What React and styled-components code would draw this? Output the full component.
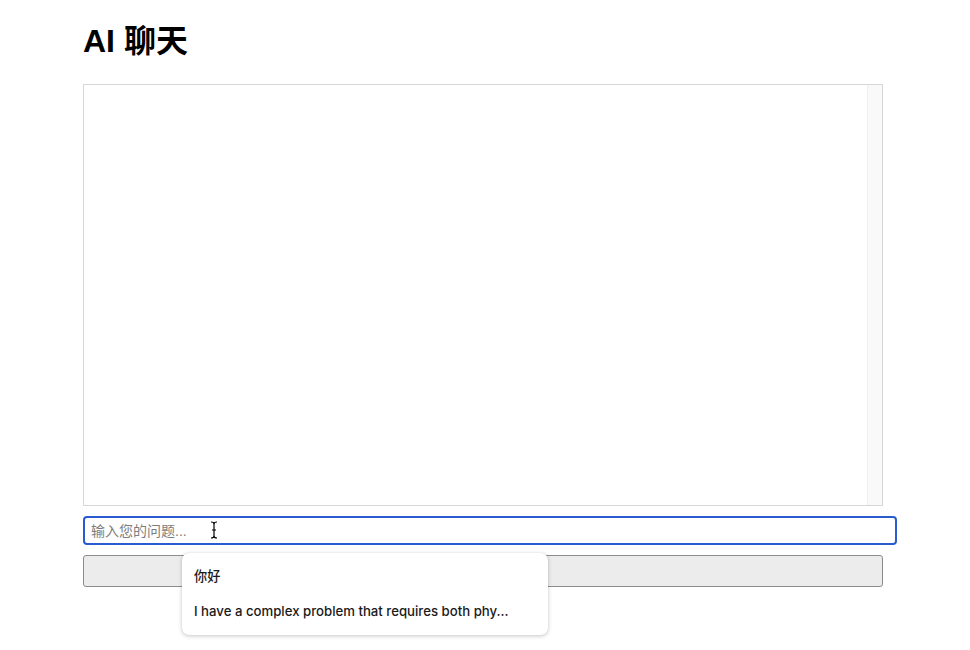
import React from 'react';
import styled, { createGlobalStyle } from 'styled-components';

const GlobalStyle = createGlobalStyle`
    html, body {
        margin: 0;
        padding: 0;
        background: #ffffff;
        font-family: "Liberation Sans", "Noto Sans CJK SC", Arial, sans-serif;
    }
`;

const Page = styled.div`
    width: 800px;
    min-height: 630px;
    padding: 20px 0 0 83px;
    position: relative;
`;

const Title = styled.h1`
    margin: 0 0 22px 0;
    font-size: 32px;
    line-height: 42px;
    font-weight: 700;
    color: #000;
    font-family: "Liberation Sans", "Noto Sans CJK SC", sans-serif;
`;

const ChatBox = styled.div`
    position: relative;
    height: 420px;
    border: 1px solid #d6d6d6;
    background: #fff;
    margin-bottom: 10px;

    &::after {
        content: '';
        position: absolute;
        top: 0;
        right: 0;
        bottom: 0;
        width: 14px;
        background: #f9f9f9;
        border-left: 1px solid #f0f0f0;
    }
`;

const InputWrap = styled.div`
    position: relative;
    margin-bottom: 10px;
`;

const Input = styled.input`
    display: block;
    box-sizing: border-box;
    width: 814px;
    height: 29px;
    padding: 0 6px;
    margin: 0;
    border: 2px solid #2a5bd0;
    border-radius: 4px;
    outline: none;
    font-size: 14px;
    color: #222;
    font-family: "Liberation Sans", "Noto Sans CJK SC", sans-serif;
    background: #fff;

    &::placeholder {
        color: #7d7d7d;
    }
`;

const Cursor = styled.svg`
    position: absolute;
    left: 126px;
    top: 5px;
    width: 10px;
    height: 18px;
`;

const SendButton = styled.button`
    display: block;
    width: 800px;
    height: 32px;
    border: 1px solid #8c8c8c;
    border-radius: 3px;
    background: #ececec;
`;

const Suggestions = styled.ul`
    position: absolute;
    left: 182px;
    top: 553px;
    width: 366px;
    margin: 0;
    padding: 6px 0;
    list-style: none;
    background: #fff;
    border-radius: 7px;
    box-shadow: 0 1px 4px rgba(0, 0, 0, 0.22), 0 0 1px rgba(0, 0, 0, 0.15);
    z-index: 5;
`;

const Suggestion = styled.li`
    padding: 0 12px;
    height: 35px;
    line-height: 35px;
    font-size: 13.2px;
    font-weight: 500;
    color: #1a1a1a;
    font-family: Inter, "Noto Sans CJK SC", sans-serif;
    white-space: nowrap;
`;

function App() {
    return (
        <>
            <GlobalStyle />
            <Page>
                <Title>AI 聊天</Title>
                <ChatBox />
                <InputWrap>
                    <Input placeholder="输入您的问题..." />
                    <Cursor viewBox="0 0 10 18">
                        <path d="M2 1 Q5 1 5 3 Q5 1 8 1 M5 3 V15 M2 17 Q5 17 5 15 Q5 17 8 17 M3 9 H7"
                            fill="none" stroke="#000" strokeWidth="1.2" />
                    </Cursor>
                </InputWrap>
                <SendButton />
                <Suggestions>
                    <Suggestion>你好</Suggestion>
                    <Suggestion>I have a complex problem that requires both phy...</Suggestion>
                </Suggestions>
            </Page>
        </>
    );
}

export default App;
